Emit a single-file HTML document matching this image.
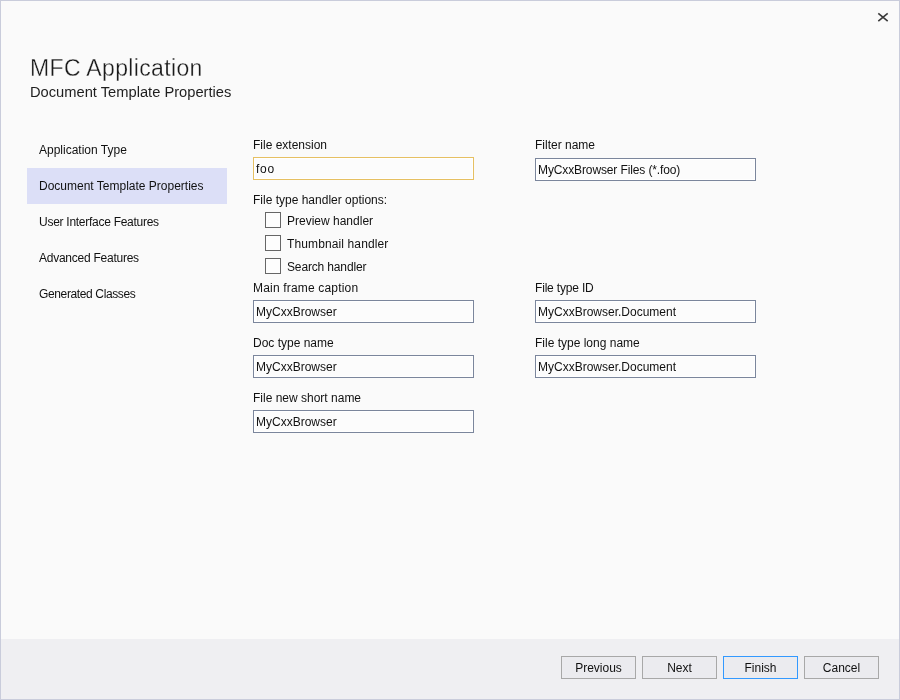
<!DOCTYPE html>
<html><head><meta charset="utf-8">
<style>
*{margin:0;padding:0;box-sizing:border-box;}
html,body{width:900px;height:700px;overflow:hidden;background:#fafafa;}
body{position:relative;font-family:"Liberation Sans",sans-serif;color:#111;}
.frame{position:absolute;left:0;top:0;width:900px;height:700px;border:1px solid #c9ccdb;}
.wrap{position:absolute;left:0;top:0;width:900px;height:700px;will-change:transform;}
.abs{position:absolute;white-space:nowrap;}
.title{left:30px;top:55px;font-size:23px;color:#1a1a1a;-webkit-text-stroke:0.3px #fafafa;letter-spacing:0.35px;}
.sub{left:30px;top:84px;font-size:14.7px;color:#1e1e1e;}
.nav{left:39px;font-size:12px;}
.sel{position:absolute;left:27px;top:168px;width:200px;height:36px;background:#dcdff7;}
.lbl{font-size:12px;}
.inp{position:absolute;width:221px;height:23px;border:1px solid #7b869c;background:#fcfcfc;box-shadow:inset 0 0 0 1px #fff;font-size:12px;padding-left:2px;padding-top:1px;line-height:21px;white-space:nowrap;}
.cb{position:absolute;left:265px;width:16px;height:16px;border:1px solid #666;background:#fdfdfd;}
.footer{position:absolute;left:1px;top:639px;width:898px;height:60px;background:#efeff2;}
.btn{position:absolute;top:656px;width:75px;height:23px;border:1px solid #a8a8a8;background:#ebebef;font-size:12px;text-align:center;line-height:21px;padding-top:1px;}
.close{position:absolute;left:876px;top:11px;line-height:0;}
</style></head><body>
<div class="wrap">
<div class="frame"></div>
<div class="close"><svg width="14" height="12" viewBox="0 0 14 12"><path d="M2.3 2.3L11.7 10.2M11.7 2.3L2.3 10.2" stroke="#3a3a3a" stroke-width="1.6"/></svg></div>
<div class="abs title">MFC Application</div>
<div class="abs sub">Document Template Properties</div>

<div class="sel"></div>
<div class="abs nav" style="top:143px">Application Type</div>
<div class="abs nav" style="top:179px">Document Template Properties</div>
<div class="abs nav" style="top:215px;letter-spacing:-0.27px">User Interface Features</div>
<div class="abs nav" style="top:251px;letter-spacing:-0.25px">Advanced Features</div>
<div class="abs nav" style="top:287px;letter-spacing:-0.37px">Generated Classes</div>

<div class="abs lbl" style="left:253px;top:138px">File extension</div>
<div class="inp" style="left:253px;top:157px;border-color:#e6c062;letter-spacing:0.7px">foo</div>
<div class="abs lbl" style="left:535px;top:138px">Filter name</div>
<div class="inp" style="left:535px;top:158px;letter-spacing:-0.12px">MyCxxBrowser Files (*.foo)</div>

<div class="abs lbl" style="left:253px;top:193px">File type handler options:</div>
<div class="cb" style="top:212px"></div>
<div class="abs lbl" style="left:287px;top:214px">Preview handler</div>
<div class="cb" style="top:235px"></div>
<div class="abs lbl" style="left:287px;top:237px;letter-spacing:0.12px">Thumbnail handler</div>
<div class="cb" style="top:258px"></div>
<div class="abs lbl" style="left:287px;top:260px;letter-spacing:-0.15px">Search handler</div>

<div class="abs lbl" style="left:253px;top:281px;letter-spacing:0.18px">Main frame caption</div>
<div class="inp" style="left:253px;top:300px">MyCxxBrowser</div>
<div class="abs lbl" style="left:535px;top:281px;letter-spacing:-0.18px">File type ID</div>
<div class="inp" style="left:535px;top:300px">MyCxxBrowser.Document</div>

<div class="abs lbl" style="left:253px;top:336px">Doc type name</div>
<div class="inp" style="left:253px;top:355px">MyCxxBrowser</div>
<div class="abs lbl" style="left:535px;top:336px">File type long name</div>
<div class="inp" style="left:535px;top:355px">MyCxxBrowser.Document</div>

<div class="abs lbl" style="left:253px;top:391px">File new short name</div>
<div class="inp" style="left:253px;top:410px">MyCxxBrowser</div>

<div class="footer"></div>
<div class="btn" style="left:561px">Previous</div>
<div class="btn" style="left:642px">Next</div>
<div class="btn" style="left:723px;border-color:#3399ff">Finish</div>
<div class="btn" style="left:804px">Cancel</div>
</div>
</body></html>
